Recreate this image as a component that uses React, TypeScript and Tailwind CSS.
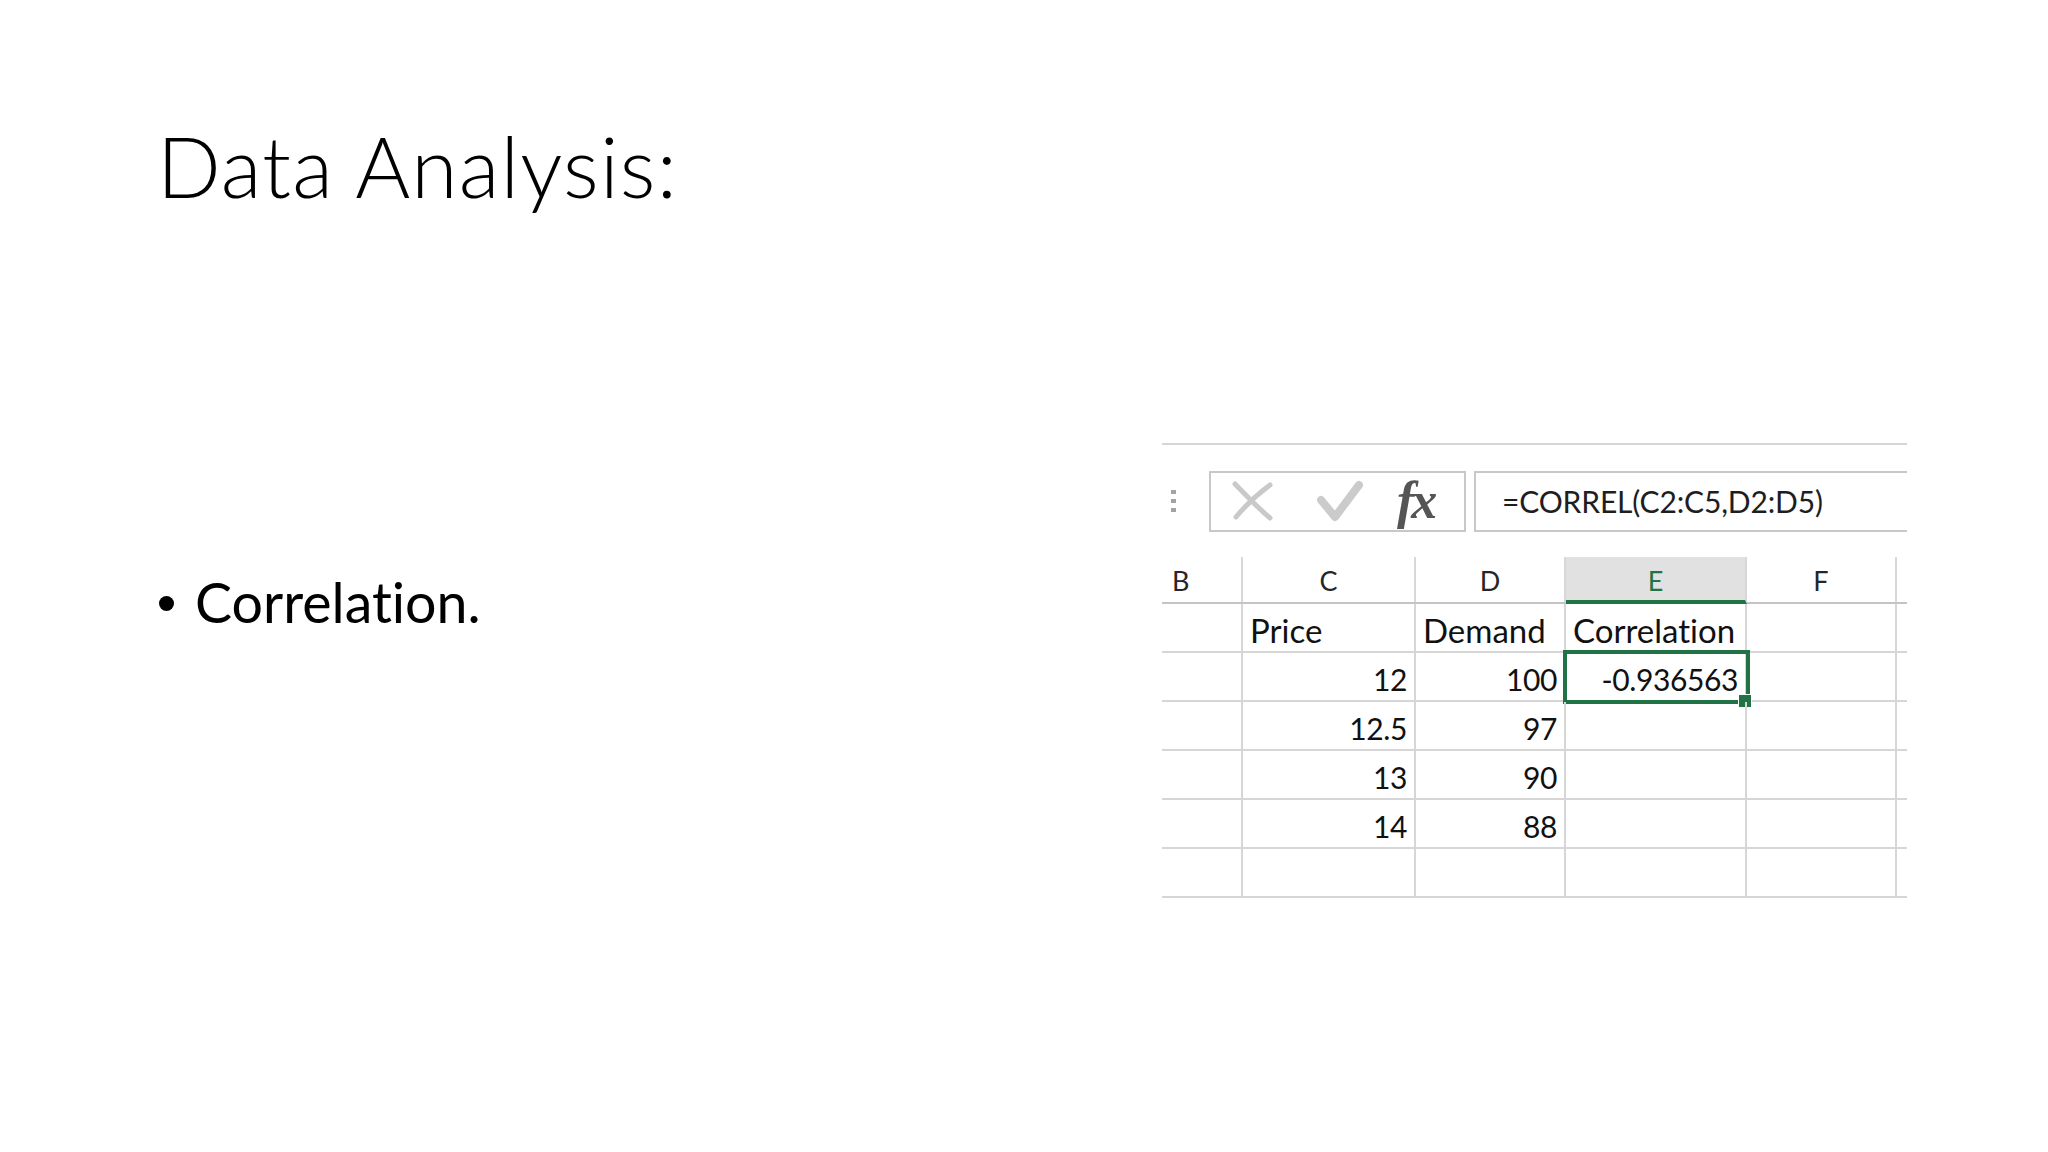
import React from 'react';

const cols = ['w-[81px]', 'w-[173px]', 'w-[150px]', 'w-[181px]', 'w-[150px]'];

const rows: { c: string; d: string; e: string; header?: boolean }[] = [
  { c: 'Price', d: 'Demand', e: 'Correlation', header: true },
  { c: '12', d: '100', e: '-0.936563' },
  { c: '12.5', d: '97', e: '' },
  { c: '13', d: '90', e: '' },
  { c: '14', d: '88', e: '' },
  { c: '', d: '', e: '' },
];

function Toolbar() {
  return (
    <div className="flex items-center h-[114px] border-t-2 border-[#d6d6d6]">
      <div className="w-[47px] h-full flex items-center pl-[9px]">
        <div className="flex flex-col gap-[5px]">
          <div className="w-[5px] h-[4px] bg-[#a3a3a3]" />
          <div className="w-[5px] h-[4px] bg-[#a3a3a3]" />
          <div className="w-[5px] h-[4px] bg-[#a3a3a3]" />
        </div>
      </div>
      <div className="w-[257px] h-[61px] border-2 border-[#c8c8c8] flex items-center">
        <svg width="42" height="40" viewBox="0 0 42 40" className="ml-[21px]">
          <path d="M3 3 C14 14 26 27 38 37" stroke="#c9c9c9" strokeWidth="5" fill="none" strokeLinecap="round" />
          <path d="M38 4 C27 12 14 24 4 36" stroke="#c9c9c9" strokeWidth="5" fill="none" strokeLinecap="round" />
        </svg>
        <svg width="46" height="42" viewBox="0 0 46 42" className="ml-[43px]">
          <path d="M4 20 L18 37 L42 5" stroke="#cbcbcb" strokeWidth="8" fill="none" strokeLinejoin="round" strokeLinecap="round" />
        </svg>
        <span className="ml-[34px] text-[52px] leading-none italic font-semibold text-[#555] font-['Liberation_Serif',serif] tracking-[-3px]">
          fx
        </span>
      </div>
      <div className="ml-[8px] flex-1 h-[61px] border-y-2 border-l-2 border-[#c8c8c8] flex items-center pl-[26px] text-[30px] text-[#1e1e1e] font-['Lato',sans-serif] tracking-[-0.15px]">
        =CORREL(C2:C5,D2:D5)
      </div>
    </div>
  );
}

function HeaderRow() {
  const letters = ['B', 'C', 'D', 'E', 'F'];
  return (
    <div className="flex h-[47px] border-b-2 border-[#c4c4c4] text-[27px] font-['Lato',sans-serif] text-[#262626]">
      {letters.map((l, i) => (
        <div
          key={l}
          className={
            cols[i] +
            ' border-r-2 border-[#d8d8d8] flex items-center ' +
            (i === 0 ? 'pl-[10px] ' : 'justify-center ') +
            (l === 'E' ? 'bg-[#e1e1e1] text-[#217346] border-b-4 border-b-[#217346] -mb-[2px] pt-[5px]' : 'pt-[4px]')
          }
        >
          {l}
        </div>
      ))}
      <div className="flex-1" />
    </div>
  );
}

function Cell({ w, text, header, extra }: { w: string; text: string; header?: boolean; extra?: React.ReactNode }) {
  return (
    <div
      className={
        w +
        ' relative border-r-2 border-[#d6d6d6] flex items-center px-[7px] pt-[5px] ' +
        (header ? 'justify-start text-[33px] [font-variant-ligatures:none]' : 'justify-end text-[30px] tracking-[-0.4px]')
      }
    >
      {text}
      {extra}
    </div>
  );
}

function Spreadsheet() {
  return (
    <div className="w-[745px] font-['Lato',sans-serif]">
      <Toolbar />
      <HeaderRow />
      {rows.map((r, ri) => (
        <div key={ri} className="flex h-[49px] border-b-2 border-[#d6d6d6] text-[#111] leading-none">
          <div className={cols[0] + ' border-r-2 border-[#d6d6d6]'} />
          <Cell w={cols[1]} text={r.c} header={r.header} />
          <Cell w={cols[2]} text={r.d} header={r.header} />
          <Cell
            w={cols[3]}
            text={r.e}
            header={r.header}
            extra={
              ri === 1 ? (
                <>
                  <div className="absolute -left-[3px] -top-[3px] w-[187px] h-[54px] border-[4px] border-[#217346]" />
                  <div className="absolute -right-[7px] -bottom-[8px] w-[14px] h-[14px] bg-[#217346] border border-white" />
                </>
              ) : null
            }
          />
          <div className={cols[4] + ' border-r-2 border-[#d6d6d6]'} />
          <div className="flex-1" />
        </div>
      ))}
    </div>
  );
}

export default function App() {
  return (
    <div className="w-[2048px] h-[1152px] bg-white overflow-hidden text-black">
      <h1 className="pl-[157px] pt-[124px] text-[84px] leading-none font-light font-['Lato',sans-serif] tracking-[1.2px]">
        Data Analysis:
      </h1>
      <div className="flex mt-[235px]">
        <div className="w-[1162px] pl-[159px] pt-[131px]">
          <div className="flex items-center">
            <div className="w-[15px] h-[15px] rounded-full bg-black mt-[4px]" />
            <span className="ml-[21px] text-[55.5px] leading-none font-['Lato',sans-serif] [font-variant-ligatures:none]">
              Correlation.
            </span>
          </div>
        </div>
        <Spreadsheet />
      </div>
    </div>
  );
}
